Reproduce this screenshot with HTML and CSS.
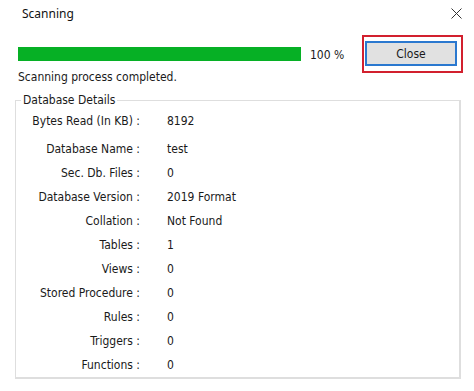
FILE: index.html
```html
<!DOCTYPE html>
<html>
<head>
<meta charset="utf-8">
<link rel="stylesheet" href="styles.css">
</head>
<body>
<div class="dialog">
  <div class="titlebar">
    <span class="title">Scanning</span>
    <svg class="xbtn" width="11" height="11" viewBox="0 0 11 11"><path d="M0.5 0.5 L10.5 10.5 M10.5 0.5 L0.5 10.5" stroke="#333" stroke-width="1" fill="none"/></svg>
  </div>
  <div class="progress-row">
    <div class="bar"><div class="fill" style="width:100%"></div></div>
    <span class="pct">100 %</span>
    <div class="highlight"><button class="close">Close</button></div>
  </div>
  <div class="status">Scanning process completed.</div>
  <fieldset class="group">
    <legend>Database Details</legend>
    <div class="rows">
      <div class="row first"><span class="lbl">Bytes Read (In KB) :</span><span class="val">8192</span></div>
      <div class="row"><span class="lbl">Database Name :</span><span class="val">test</span></div>
      <div class="row"><span class="lbl">Sec. Db. Files :</span><span class="val">0</span></div>
      <div class="row"><span class="lbl">Database Version :</span><span class="val">2019 Format</span></div>
      <div class="row"><span class="lbl">Collation :</span><span class="val">Not Found</span></div>
      <div class="row"><span class="lbl">Tables :</span><span class="val">1</span></div>
      <div class="row"><span class="lbl">Views :</span><span class="val">0</span></div>
      <div class="row"><span class="lbl">Stored Procedure :</span><span class="val">0</span></div>
      <div class="row"><span class="lbl">Rules :</span><span class="val">0</span></div>
      <div class="row"><span class="lbl">Triggers :</span><span class="val">0</span></div>
      <div class="row"><span class="lbl">Functions :</span><span class="val">0</span></div>
    </div>
  </fieldset>
</div>
</body>
</html>
```
FILE: styles.css
```css
html, body {
  margin: 0;
  padding: 0;
  background: #ffffff;
}
.dialog {
  width: 474px;
  box-sizing: border-box;
  font-family: "DejaVu Sans Condensed", "DejaVu Sans", sans-serif;
  font-size: 12px;
  color: #1a1a1a;
}
.titlebar {
  height: 28px;
  display: flex;
  align-items: center;
  justify-content: space-between;
  padding: 0 12px 0 22px;
}
.title {
  font-family: "Noto Sans", "Open Sans", sans-serif;
  font-size: 12px;
  color: #111;
  margin-top: -1px;
}
.xbtn {
  display: block;
  margin-top: -2px;
}
.progress-row {
  display: flex;
  align-items: center;
  margin-top: 7px;
  padding-left: 18px;
  height: 38px;
}
.bar {
  width: 283px;
  height: 14px;
  background: #e6e6e6;
}
.fill {
  height: 100%;
  background: #06b025;
}
.pct {
  margin-left: 9px;
  width: 52px;
  padding-top: 2px;
}
.highlight {
  width: 101px;
  height: 38px;
  box-sizing: border-box;
  border: 2px solid #d2202e;
  padding: 4px 4px 5px 1px;
  display: flex;
}
.close {
  flex: 1;
  margin: 0;
  border: 2px solid #2a78cf;
  background: #e1e1e1;
  font-family: "DejaVu Sans Condensed", "DejaVu Sans", sans-serif;
  font-size: 12px;
  color: #1a1a1a;
  padding: 0;
}
.status {
  padding-left: 18px;
  margin-top: -3px;
  line-height: 14px;
}
.group {
  margin: 9px 13px 0 15px;
  padding: 0;
  border: 1px solid #dedede;
  border-right-width: 2px;
  border-bottom-width: 2px;
  min-width: 0;
}
.group legend {
  margin-left: 5px;
  padding: 0 2px;
  line-height: 14px;
}
.rows {
  display: flex;
  flex-direction: column;
}
.row {
  display: grid;
  grid-template-columns: 124px auto;
  column-gap: 27px;
  height: 24px;
  align-items: center;
}
.row.first {
  margin-top: 2px;
  margin-bottom: 4px;
}
.lbl {
  text-align: right;
}
```
